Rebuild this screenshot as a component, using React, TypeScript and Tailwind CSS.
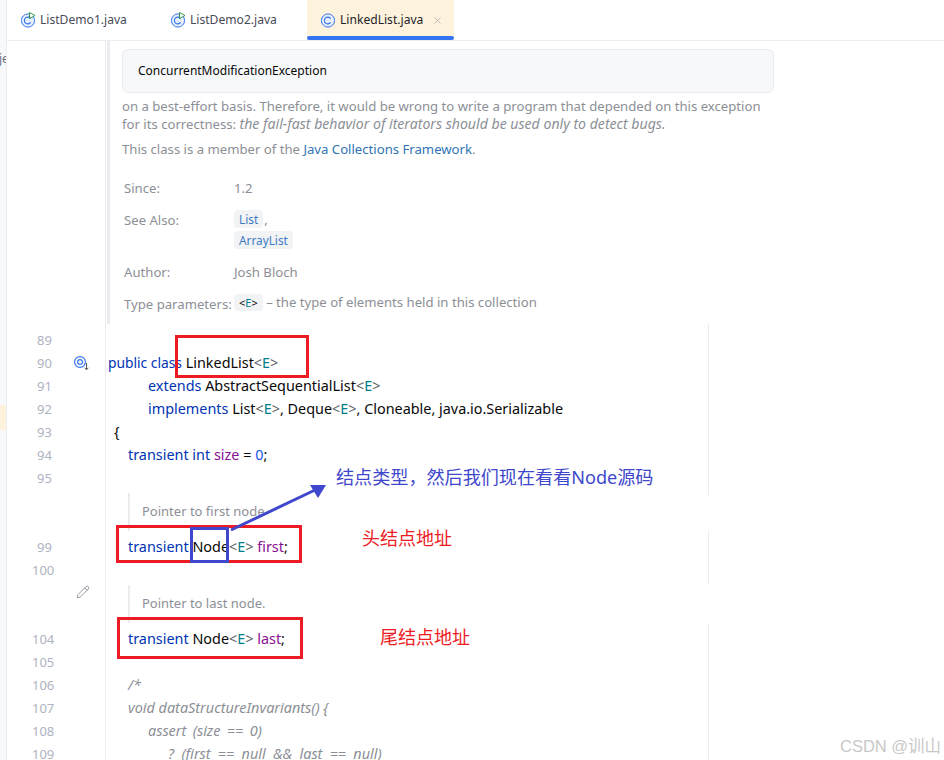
import React from "react";
import { Pencil, X } from "lucide-react";

const FONT = "font-['Noto_Sans','Noto_Sans_CJK_SC',sans-serif]";

function ClassIcon({ run }: { run?: boolean }) {
  return (
    <svg width="16" height="16" viewBox="0 0 16 16" fill="none" className="shrink-0">
      <circle cx="8" cy="8.5" r="6.6" fill="#e7effd" stroke="#3574f0" strokeWidth="1" />
      <path d="M10.6 6.6a3.4 3.4 0 1 0 0 3.8" stroke="#3574f0" strokeWidth="1.1" fill="none" />
      {run && <path d="M9.5 0.5 L15 3.5 L9.5 6.5 Z" fill="#fff" stroke="#369650" strokeWidth="1" />}
    </svg>
  );
}

function Tab({ name, run, active }: { name: string; run?: boolean; active?: boolean }) {
  return (
    <div className={active ? "relative flex h-full w-[147px] items-center bg-[#fdf3dc] pl-[13px]" : "flex h-full w-[150px] items-center pl-[13px]"}>
      <ClassIcon run={run} />
      <span className={active ? "ml-[4px] text-[12.1px] text-[#1f2329]" : "ml-[4px] text-[12.1px] text-[#494b57]"}>{name}</span>
      {active && <X size={11} className="ml-[9px] text-[#9a9ca3]" strokeWidth={1.3} />}
      {active && <div className="absolute inset-x-0 bottom-0 h-[4px] rounded-[2px] bg-[#3574f0]" />}
    </div>
  );
}

const K = ({ children }: { children: React.ReactNode }) => <span className="text-[#0033b3]">{children}</span>;
const F = ({ children }: { children: React.ReactNode }) => <span className="text-[#871094]">{children}</span>;
const T = () => <span className="text-[#007e8a]">E</span>;
const G = () => (
  <span>
    <span className="text-[#5b5f66]">&lt;</span><T /><span className="text-[#5b5f66]">&gt;</span>
  </span>
);

function Row({ n, icon, children, indent = 0 }: { n?: string; icon?: React.ReactNode; children?: React.ReactNode; indent?: number }) {
  return (
    <div className="flex h-[23px] items-center">
      <div className="flex h-full w-[99px] shrink-0 items-center border-r border-[#ebecf0]">
        <span className="w-[46px] text-left text-[13px] text-[#aeb3c2]" style={{ paddingLeft: n && n.length > 2 ? 25 : 30 }}>{n}</span>
        <span className="ml-[21px] flex w-[17px] items-center">{icon}</span>
      </div>
      <div className="h-full w-[603px] whitespace-pre border-r border-[#ebecf0] text-[14.4px] leading-[21px] text-[#080808]" style={{ paddingLeft: indent + 2 }}>
        {children}
      </div>
    </div>
  );
}

function Spacer({ h }: { h: number }) {
  return (
    <div className="flex" style={{ height: h }}>
      <div className="w-[99px] shrink-0 border-r border-[#ebecf0]" />
      <div className="w-[603px] shrink-0 border-r border-[#ebecf0]" />
    </div>
  );
}

function CodeDoc({ text, icon, className }: { text: string; icon?: React.ReactNode; className?: string }) {
  return (
    <div className={`flex h-[38px] ${className ?? ""}`}>
      <div className="flex w-[99px] shrink-0 items-start border-r border-[#ebecf0] pl-[69px]">{icon}</div>
      <div className="ml-[22px] flex w-[500px] items-center border-l-[2px] border-[#ebecf0] pl-[12px] text-[13px] text-[#8c8f96]">
        {text}
      </div>
    </div>
  );
}

function Meta({ label, children }: { label: string; children: React.ReactNode }) {
  return (
    <div className="flex text-[13.15px] text-[#8c8f96]">
      <div className="w-[110px] shrink-0">{label}</div>
      <div>{children}</div>
    </div>
  );
}

const Chip = ({ children }: { children: React.ReactNode }) => (
  <span className="rounded-[4px] bg-[#f2f3f5] px-[5px] py-[1px] text-[11.8px] text-[#3d7cc4]">{children}</span>
);

function OverrideIcon() {
  return (
    <svg width="17" height="15" viewBox="0 0 17 15" fill="none">
      <circle cx="6" cy="6" r="5.4" stroke="#3574f0" strokeWidth="1.2" />
      <circle cx="6" cy="6" r="2.4" stroke="#3574f0" strokeWidth="1.2" />
      <path d="M12.5 7v6.5M10.7 11.8 12.5 13.8l1.8-2" stroke="#55585f" strokeWidth="1" />
    </svg>
  );
}

export default function App() {
  return (
    <div className={`relative flex h-[760px] w-[944px] overflow-hidden bg-white ${FONT}`}>
      <div className="relative w-[7px] shrink-0 overflow-hidden border-r border-[#ebecf0] bg-[#f7f8fa]">
        <span className="absolute left-[-1px] top-[50px] text-[12px] text-[#6c707e]">je</span>
        <div className="absolute inset-x-0 top-[405px] h-[25px] bg-[#fdf3dc]" />
      </div>
      <div className="flex min-w-0 flex-1 flex-col">
        <div className="flex h-[41px] shrink-0 items-center border-b border-[#ebecf0]">
          <Tab name="ListDemo1.java" run />
          <Tab name="ListDemo2.java" run />
          <Tab name="LinkedList.java" active />
        </div>
        <div className="flex h-[283px] shrink-0">
          <div className="w-[99px] shrink-0 border-r border-[#ebecf0]" />
          <div className="ml-[1px] w-[3px] shrink-0 bg-[#ebecf0]" />
          <div className="pl-[12px] pt-[8px]">
            <div className="flex h-[44px] w-[652px] items-center rounded-[6px] border border-[#ebecf0] bg-[#f7f8fa] pl-[15px] text-[12px] text-[#080808]">
              ConcurrentModificationException
            </div>
            <p className="mt-[4px] w-[652px] text-[13.15px] leading-[18px] text-[#8c8f96]">
              on a best-effort basis. Therefore, it would be wrong to write a program that depended on this exception
              <br />
              for its correctness: <i className="text-[14.1px]">the fail-fast behavior of iterators should be used only to detect bugs.</i>
            </p>
            <p className="mt-[7px] text-[13.15px] leading-[18px] text-[#8c8f96]">
              This class is a member of the <span className="text-[#2f75b5]">Java Collections Framework</span>.
            </p>
            <div className="ml-[2px] mt-[21px] flex flex-col">
              <div className="h-[32px]"><Meta label="Since:">1.2</Meta></div>
              <div className="h-[52px]">
                <Meta label="See Also:">
                  <div className="-mt-[1px] flex flex-col gap-[3px] leading-[18px]">
                    <div><Chip>List</Chip><span className="ml-[1px]">,</span></div>
                    <div><Chip>ArrayList</Chip></div>
                  </div>
                </Meta>
              </div>
              <div className="h-[32px]"><Meta label="Author:">Josh Bloch</Meta></div>
              <Meta label="Type parameters:">
                <span className="relative top-[-2px]">
                  <span className="rounded-[4px] bg-[#f2f3f5] px-[5px] py-[1px] text-[11px]"><span className="text-[#080808]">&lt;</span><T /><span className="text-[#080808]">&gt;</span></span>
                  <span> – the type of elements held in this collection</span>
                </span>
              </Meta>
            </div>
          </div>
        </div>
        <div className="flex flex-col">
          <Spacer h={5} />
          <Row n="89" />
          <Row n="90" icon={<OverrideIcon />}><span className="text-[13.8px] text-[#0033b3]">public class</span> LinkedList<G /></Row>
          <Row n="91" indent={40}><K>extends</K> AbstractSequentialList<G /></Row>
          <Row n="92" indent={40}><K>implements</K> List<G />, Deque<G />, Cloneable, java.io.Serializable</Row>
          <Row n="93" indent={6}>{"{"}</Row>
          <Row n="94" indent={20}><K>transient int</K> <F>size</F> = <span className="text-[#1750eb]">0</span>;</Row>
          <Row n="95" />
          <Spacer h={5} />
          <CodeDoc text="Pointer to first node" className="-mt-[2px]" />
          <Spacer h={5} />
          <Row n="99" indent={20}><K>transient</K> Node<G /> <F>first</F>;</Row>
          <Row n="100" />
          <Spacer h={3} />
          <CodeDoc text="Pointer to last node." icon={<Pencil size={14} strokeWidth={1.2} className="text-[#6c707e]" />} />
          <Spacer h={5} />
          <Row n="104" indent={20}><K>transient</K> Node<G /> <F>last</F>;</Row>
          <Row n="105" />
          <Row n="106" indent={20}><span className="italic text-[#8c8f96]">/*</span></Row>
          <Row n="107" indent={20}><span className="italic text-[#8c8f96]">void dataStructureInvariants() {"{"}</span></Row>
          <Row n="108" indent={40}><span className="italic text-[#8c8f96] [word-spacing:2.7px]">assert (size == 0)</span></Row>
          <Row n="109" indent={60}><span className="italic text-[#8c8f96] [word-spacing:3.5px]">? (first == null &amp;&amp; last == null)</span></Row>
        </div>
      </div>

      <div className="absolute left-[175px] top-[335px] h-[43px] w-[134px] border-[3px] border-[#ed1c24]" />
      <div className="absolute left-[116px] top-[525px] h-[38px] w-[186px] border-[3px] border-[#ed1c24]" />
      <div className="absolute left-[190px] top-[527px] h-[36px] w-[39px] border-[3px] border-[#3f48cc]" />
      <div className="absolute left-[117px] top-[617px] h-[42px] w-[186px] border-[3px] border-[#ed1c24]" />
      <svg className="absolute left-[225px] top-[480px]" width="105" height="55" viewBox="0 0 105 55" fill="none">
        <path d="M6 50 L90 10" stroke="#3f48cc" strokeWidth="3" />
        <path d="M101 5 L85 5 L93 18 Z" fill="#3f48cc" />
      </svg>
      <div className="absolute left-[336px] top-[464px] whitespace-nowrap text-[18.1px] leading-[26px] text-[#3f48cc]">结点类型，然后我们现在看看Node源码</div>
      <div className="absolute left-[362px] top-[525px] whitespace-nowrap text-[18px] leading-[26px] text-[#ed1c24]">头结点地址</div>
      <div className="absolute left-[380px] top-[624px] whitespace-nowrap text-[18px] leading-[26px] text-[#ed1c24]">尾结点地址</div>
      <div className="absolute left-[840px] top-[735px] whitespace-nowrap font-['Liberation_Sans','Noto_Sans_CJK_SC',sans-serif] text-[16.5px] leading-[22px] text-[#c8c8c8]">CSDN @训山</div>
    </div>
  );
}
